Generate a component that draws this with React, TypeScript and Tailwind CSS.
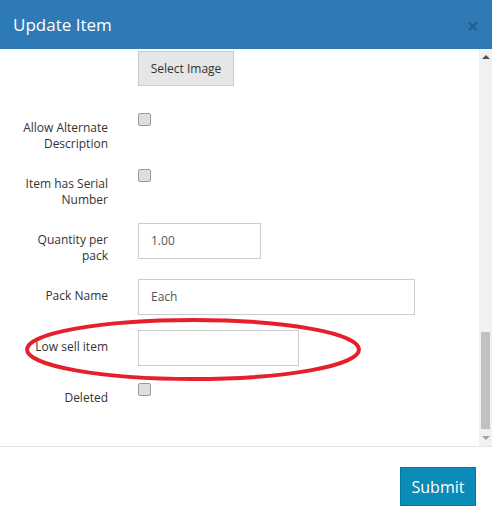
import React from "react";

// A form row: right-aligned label column, control column starting at x=138
function Row({ label, children, className = "" }: { label: string; children: React.ReactNode; className?: string }) {
    return (
        <div className={`flex items-start ${className}`}>
            <label className="w-[108px] shrink-0 pl-[15px] pt-[9px] text-right text-[12px] leading-4 text-[#333]">
                {label}
            </label>
            <div className="ml-[30px]">{children}</div>
        </div>
    );
}

function Checkbox() {
    return <span className="mt-[2px] block h-[13px] w-[13px] rounded-[2px] border border-[#9a9a9a] bg-[#dedede]" />;
}

function TextInput({ value, width }: { value: string; width: string }) {
    return (
        <div className={`flex h-[36px] items-center border border-[#ccc] bg-white pl-[12px] text-[12px] text-[#555] ${width}`}>
            {value}
        </div>
    );
}

export default function App() {
    return (
        <div className="flex h-[526px] w-[492px] flex-col overflow-hidden bg-white font-['Open_Sans',sans-serif]">
            {/* Header */}
            <div className="flex h-[49px] shrink-0 items-center justify-between bg-[#2e7ab6] pl-[13px] pr-[13px]">
                <h2 className="text-[17px] text-white">Update Item</h2>
                <span className="text-[22px] leading-none font-bold text-[#24608f]">×</span>
            </div>

            {/* Body */}
            <div className="flex h-[397px] shrink-0">
                <div className="relative flex-1 pt-[2px]">
                    <div className="ml-[138px] mb-[25px]">
                        <div className="flex h-[35px] w-[96px] items-center justify-center border border-[#ccc] bg-[#e6e6e6] text-[12px] text-[#333]">
                            Select Image
                        </div>
                    </div>

                    <Row label="Allow Alternate Description" className="mb-[15px]">
                        <Checkbox />
                    </Row>
                    <Row label="Item has Serial Number" className="mb-[15px]">
                        <Checkbox />
                    </Row>
                    <Row label="Quantity per pack" className="mb-[15px]">
                        <TextInput value="1.00" width="w-[123px]" />
                    </Row>
                    <Row label="Pack Name" className="mb-[15px]">
                        <TextInput value="Each" width="w-[277px]" />
                    </Row>
                    <Row label="Low sell item" className="mb-[15px]">
                        <TextInput value="" width="w-[161px]" />
                    </Row>
                    <Row label="Deleted">
                        <Checkbox />
                    </Row>

                    {/* red annotation ring */}
                    <svg className="pointer-events-none absolute left-0 top-0" width="479" height="397">
                        <ellipse cx="193" cy="300.5" rx="166" ry="29.5" fill="none" stroke="#e5202b" strokeWidth="4" />
                    </svg>
                </div>

                {/* scrollbar */}
                <div className="flex w-[13px] shrink-0 flex-col items-center bg-[#f1f1f1]">
                    <div className="mt-[6px] h-0 w-0 border-x-[4px] border-b-[4px] border-x-transparent border-b-[#505050]" />
                    <div className="flex-1" />
                    <div className="h-[97px] w-[9px] bg-[#c1c1c1]" />
                    <div className="mt-[7px] mb-[6px] h-0 w-0 border-x-[4px] border-t-[4px] border-x-transparent border-t-[#a3a3a3]" />
                </div>
            </div>

            {/* Footer */}
            <div className="flex flex-1 justify-end border-t border-[#e5e5e5] px-[16px] pt-[20px]">
                <button className="h-[39px] w-[76px] border border-[#007a9f] bg-[#0a8bb8] text-[16px] text-white">
                    Submit
                </button>
            </div>
        </div>
    );
}
